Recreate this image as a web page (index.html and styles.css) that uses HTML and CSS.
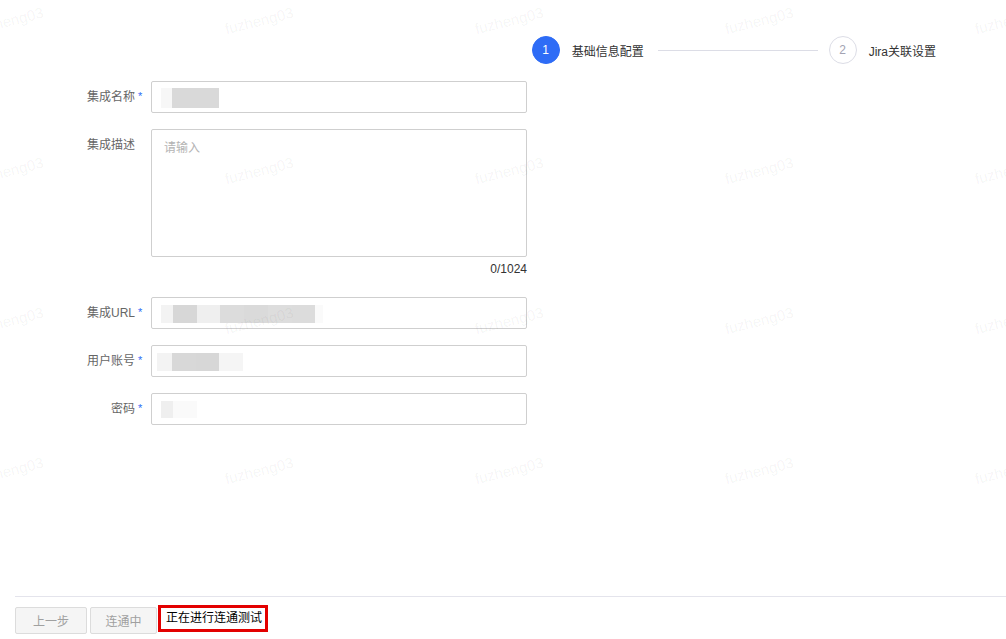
FILE: index.html
```html
<!DOCTYPE html>
<html lang="zh">
<head>
<meta charset="utf-8">
<title>集成配置</title>
<link rel="stylesheet" href="styles.css">
</head>
<body>
<div class="page">
  <div class="main">
    <div class="steps">
      <div class="step">
        <span class="dot dot-active">1</span>
        <span class="step-label">基础信息配置</span>
      </div>
      <span class="step-line"></span>
      <div class="step">
        <span class="dot">2</span>
        <span class="step-label">Jira关联设置</span>
      </div>
    </div>

    <form class="form">
      <div class="row">
        <label class="label">集成名称</label><span class="star">*</span>
        <div class="input">
          <div class="mosaic m-h20">
            <i class="w11 c-f7"></i><i class="w47 c-d9"></i>
          </div>
        </div>
      </div>

      <div class="row row-area">
        <label class="label">集成描述</label><span class="star"></span>
        <div class="area-wrap">
          <div class="textarea"><span class="placeholder">请输入</span></div>
          <div class="counter">0/1024</div>
        </div>
      </div>

      <div class="row">
        <label class="label">集成URL</label><span class="star">*</span>
        <div class="input">
          <div class="mosaic m-h18">
            <i class="w12 c-f3"></i><i class="w24 c-d7"></i><i class="w23 c-ef"></i><i class="w24 c-dc"></i><i class="w24 c-da"></i><i class="w24 c-dd"></i><i class="w23 c-dc"></i><i class="w8 c-fa"></i>
          </div>
        </div>
      </div>

      <div class="row">
        <label class="label">用户账号</label><span class="star">*</span>
        <div class="input">
          <div class="mosaic m-h18 m-left5">
            <i class="w15 c-f3"></i><i class="w24 c-d8"></i><i class="w23 c-d7"></i><i class="w24 c-f5"></i>
          </div>
        </div>
      </div>

      <div class="row">
        <label class="label">密码</label><span class="star">*</span>
        <div class="input">
          <div class="mosaic m-h17">
            <i class="w12 c-ef"></i><i class="w24 c-fa"></i>
          </div>
        </div>
      </div>
    </form>
  </div>

  <div class="footer">
    <button class="btn" type="button">上一步</button>
    <button class="btn" type="button">连通中</button>
    <span class="status">正在进行连通测试</span>
  </div>

  <div class="watermark" aria-hidden="true">
    <span>fuzheng03</span><span>fuzheng03</span><span>fuzheng03</span><span>fuzheng03</span><span>fuzheng03</span>
    <span>fuzheng03</span><span>fuzheng03</span><span>fuzheng03</span><span>fuzheng03</span><span>fuzheng03</span>
    <span>fuzheng03</span><span>fuzheng03</span><span>fuzheng03</span><span>fuzheng03</span><span>fuzheng03</span>
    <span>fuzheng03</span><span>fuzheng03</span><span>fuzheng03</span><span>fuzheng03</span><span>fuzheng03</span>
  </div>
</div>
</body>
</html>
```

FILE: styles.css
```css
* { box-sizing: border-box; }
html, body { margin: 0; padding: 0; background: #fff; }
body {
  font-family: "Liberation Sans", "Noto Sans CJK SC", sans-serif;
  font-size: 12px;
  color: #333;
}
.page {
  position: relative;
  width: 1006px;
  height: 639px;
  overflow: hidden;
  display: flex;
  flex-direction: column;
}
.main { flex: 1; }

/* steps */
.steps {
  display: flex;
  justify-content: flex-end;
  align-items: center;
  padding: 36px 70px 0 0;
  height: 64px;
}
.step { display: flex; align-items: center; gap: 12px; }
.dot {
  width: 28px; height: 28px;
  border-radius: 50%;
  border: 1px solid #dcdde6;
  color: #a3a3b3;
  display: flex; align-items: center; justify-content: center;
  font-size: 12px;
}
.dot-active { background: #2e6cf6; border-color: #2e6cf6; color: #fff; }
.step-label { color: #333; font-size: 12px; }
.step-line {
  width: 160px; height: 1px;
  background: #dcdde6;
  margin: 0 11px 0 14px;
}

/* form */
.form { margin-top: 17px; }
.row { display: flex; align-items: flex-start; margin-bottom: 16px; }
.label {
  width: 135px;
  text-align: right;
  line-height: 32px;
  color: #666;
  font-size: 12px;
}
.star {
  width: 16px;
  line-height: 30px;
  color: #2e6cf6;
  font-size: 11px;
  padding-left: 3px;
}
.input {
  width: 376px;
  height: 32px;
  border: 1px solid #cfcfcf;
  border-radius: 2px;
  display: flex;
  align-items: center;
  padding-left: 9px;
}
.area-wrap { width: 376px; }
.textarea {
  height: 128px;
  border: 1px solid #cfcfcf;
  border-radius: 2px;
  padding: 8px 12px;
}
.placeholder { color: #b3b3b3; }
.counter {
  text-align: right;
  line-height: 24px;
  color: #333;
  font-size: 12px;
}
.row-area { margin-bottom: 16px; }

/* mosaic (blurred data) */
.mosaic { display: flex; }
.mosaic i { display: block; height: 100%; }
.m-h20 { height: 20px; margin-top: 2px; }
.m-h18 { height: 18px; margin-top: 2px; }
.m-h17 { height: 17px; margin-top: 1px; }
.m-left5 { margin-left: -4px; }
.w8 { width: 8px; } .w11 { width: 11px; } .w12 { width: 12px; } .w15 { width: 15px; }
.w23 { width: 23px; } .w24 { width: 24px; } .w47 { width: 47px; }
.c-f7 { background: #f7f7f7; } .c-d9 { background: #d9d9d9; }
.c-f3 { background: #f3f3f3; } .c-d7 { background: #d7d7d7; }
.c-ef { background: #efefef; } .c-dc { background: #dcdcdc; }
.c-da { background: #dadada; } .c-dd { background: #dddddd; }
.c-fa { background: #fafafa; } .c-d8 { background: #d8d8d8; }
.c-f5 { background: #f5f5f5; }

/* footer */
.footer {
  margin-left: 15px;
  height: 43px;
  border-top: 1px solid #e4e4ec;
  display: flex;
  align-items: flex-start;
  gap: 3px;
}
.btn {
  margin-top: 10px;
  height: 27px;
  padding: 0;
  background: #f5f5f5;
  border: 1px solid #dcdcdc;
  border-radius: 2px;
  color: #a0a0a0;
  font-family: inherit;
  font-size: 12px;
}
.btn:first-child { width: 72px; }
.btn:nth-child(2) { width: 67px; }
.status {
  margin-top: 8px;
  margin-left: -2px;
  height: 27px;
  border: 3px solid #e30000;
  padding: 0 3px 0 5px;
  line-height: 21px;
  color: #000;
  font-size: 12px;
}

/* watermark overlay */
.watermark {
  position: absolute;
  top: -55px;
  left: -116px;
  display: grid;
  grid-template-columns: repeat(5, 250px);
  grid-template-rows: repeat(4, 150px);
  pointer-events: none;
}
.watermark span {
  display: flex;
  align-items: center;
  justify-content: center;
  font-family: "Liberation Sans", sans-serif;
  font-size: 15px;
  color: rgba(0, 0, 0, 0.05);
  transform: rotate(-14deg);
}
```
